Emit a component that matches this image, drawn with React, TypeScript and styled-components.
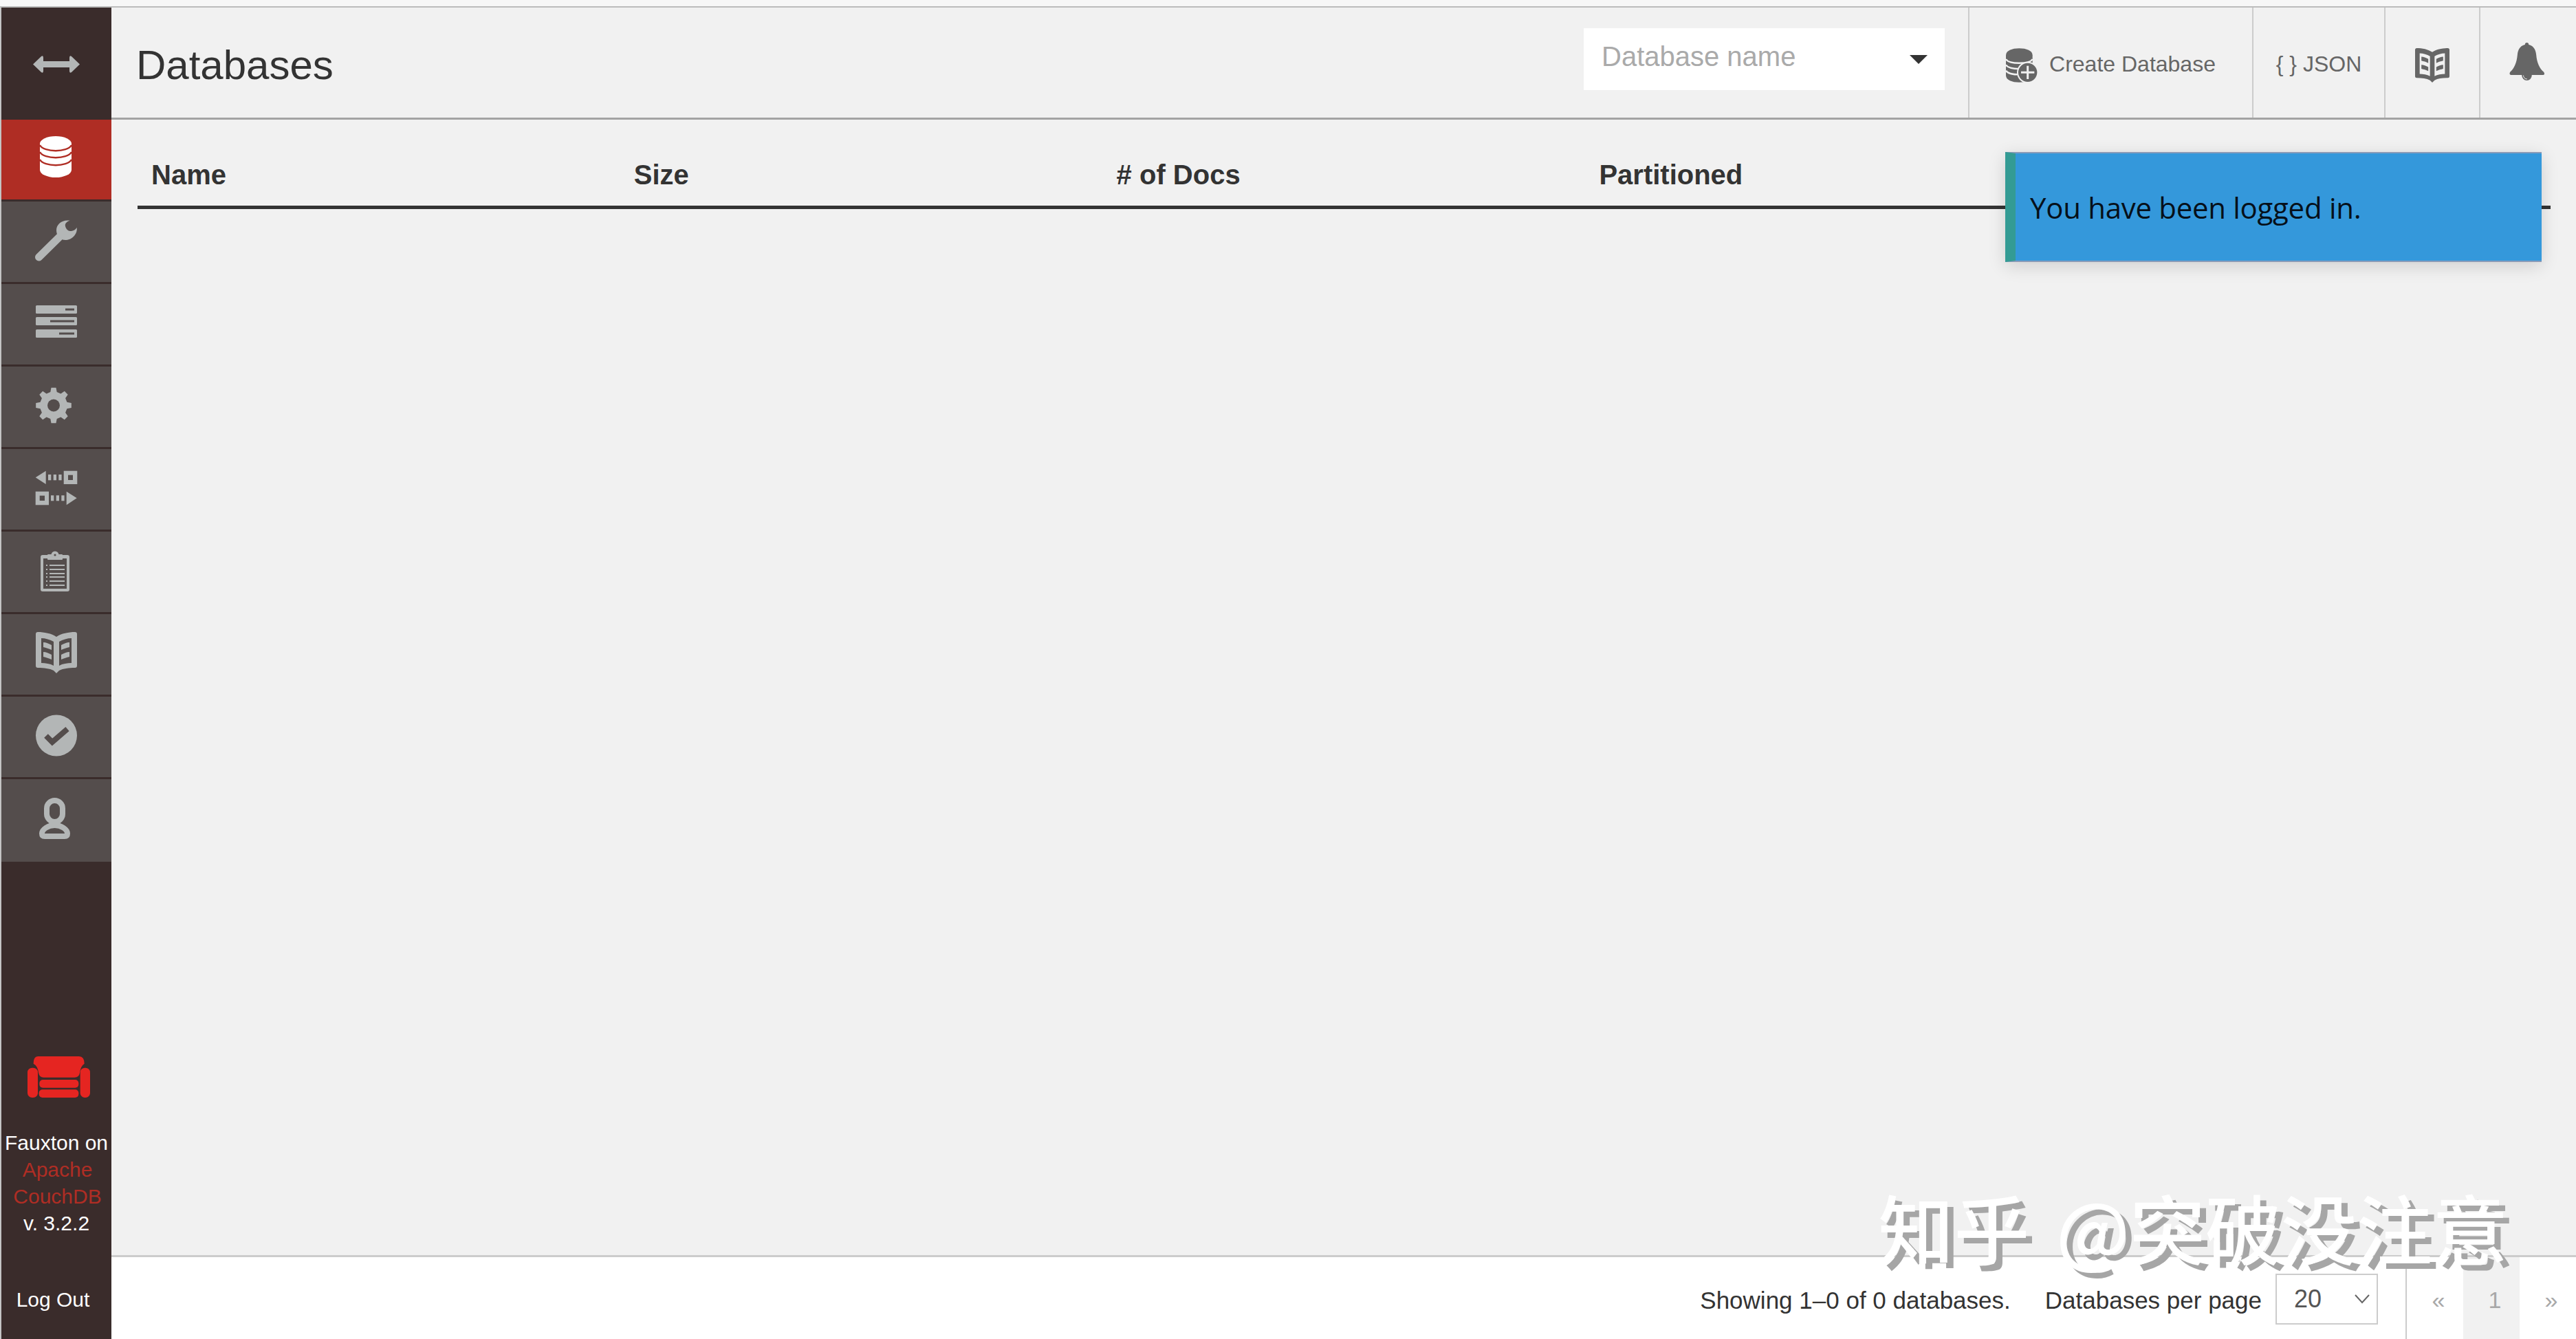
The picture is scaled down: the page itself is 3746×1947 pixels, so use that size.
import React from "react";
import styled, { createGlobalStyle } from "styled-components";

const SANS = `"Liberation Sans", Arial, sans-serif`;
const NAV_INK = "#b3b6b6";
const NAV_BG = "#544d4c";
const DARK = "#3a2c2b";
const RED = "#af2d24";
const GREY = "#666666";

const Global = createGlobalStyle`
  html, body { margin: 0; padding: 0; height: 100%; background: #f1f1f1; overflow: hidden; }
  #root { height: 100%; }
  * { box-sizing: border-box; }
`;

const Page = styled.div`
  position: relative;
  height: 100vh;
  display: flex;
  flex-direction: column;
  font-family: ${SANS};
  color: #333;
  background: #f1f1f1;
`;
const TopStrip = styled.div`
  height: 11px;
  flex: none;
  background: #f7f7f7;
  border-bottom: 2px solid #bcbcbc;
`;
const Shell = styled.div`
  flex: 1;
  min-height: 0;
  display: flex;
  border-left: 2px solid #c4c4c4;
`;
const Sidebar = styled.nav`
  width: 160px;
  flex: none;
  display: flex;
  flex-direction: column;
  background: ${DARK};
  color: #fff;
`;
const Burger = styled.div`
  height: 163px;
  flex: none;
  display: flex;
  align-items: center;
  justify-content: center;
  padding-top: 2px;
`;
const NavItem = styled.a<{ $active?: boolean }>`
  height: ${(p) => (p.$active ? 119 : 120)}px;
  flex: none;
  display: flex;
  align-items: center;
  justify-content: center;
  background: ${(p) => (p.$active ? RED : NAV_BG)};
  border-bottom: 3px solid ${DARK};
  &:last-of-type { border-bottom: 0; }
`;
const SideFoot = styled.div`
  margin-top: auto;
  display: flex;
  flex-direction: column;
  align-items: center;
  font-size: 30px;
  line-height: 39px;
  text-align: center;
`;
const Couch = styled.svg`
  width: 91px;
  height: 60px;
  margin-left: 7px;
  margin-bottom: 46px;
`;
const Version = styled.div`
  width: 160px;
`;
const ApacheLink = styled.span`
  display: block;
  color: ${RED};
  padding: 0 13px 0 16px;
`;
const LogOut = styled.a`
  display: block;
  margin: 72px 10px 38px 0;
  font-size: 30px;
`;

const Main = styled.main`
  flex: 1;
  min-width: 0;
  display: flex;
  flex-direction: column;
`;
const Header = styled.header`
  height: 163px;
  flex: none;
  display: flex;
  align-items: stretch;
  border-bottom: 3px solid #a3a3a3;
  padding-left: 36px;
`;
const Title = styled.h1`
  margin: 0 auto 0 0;
  align-self: center;
  font-size: 60px;
  line-height: 70px;
  font-weight: 400;
  color: #333;
  position: relative;
  top: 4px;
`;
const SearchBox = styled.div`
  align-self: flex-start;
  margin: 30px 34px 0 0;
  width: 525px;
  height: 90px;
  background: #fff;
  display: flex;
  align-items: center;
  justify-content: space-between;
  padding: 0 25px 7px 26px;
  color: #aaa;
  font-size: 40px;
`;
const Caret = styled.span`
  width: 0;
  height: 0;
  margin-top: 7px;
  border-left: 13px solid transparent;
  border-right: 13px solid transparent;
  border-top: 13px solid #333;
`;
const HeaderCell = styled.a<{ $w: number }>`
  width: ${(p) => p.$w}px;
  flex: none;
  display: flex;
  align-items: center;
  justify-content: center;
  gap: 17px;
  padding-top: 7px;
  border-left: 2px solid #cccccc;
  color: ${GREY};
  font-size: 32px;
`;
const HeaderLabel = styled.span`
  position: relative;
  top: -1px;
`;

const Content = styled.section`
  flex: 1;
  min-height: 0;
  padding: 0 37px 0 38px;
`;
const TableHead = styled.div`
  display: grid;
  grid-template-columns: repeat(5, 1fr);
  height: 130px;
  align-items: end;
  border-bottom: 5px solid #333;
`;
const HeadCell = styled.div`
  padding: 0 0 22px 20px;
  font-size: 40px;
  line-height: 46px;
  font-weight: 700;
  color: #333;
`;

const Footer = styled.footer`
  height: 122px;
  flex: none;
  background: #fff;
  border-top: 3px solid #cccccc;
  display: flex;
  justify-content: flex-end;
  align-items: stretch;
  font-size: 35px;
  color: #333;
`;
const FootInfo = styled.div`
  align-self: center;
  margin: 7px 50px 0 0;
`;
const PerPage = styled.div`
  align-self: center;
  margin: 7px 20px 0 0;
`;
const PageSelect = styled.div`
  align-self: center;
  margin: 2px 40px 0 0;
  width: 149px;
  height: 74px;
  border: 2px solid #cccccc;
  display: flex;
  align-items: center;
  justify-content: space-between;
  padding: 0 10px 0 25px;
  color: #555;
  font-size: 36px;
`;
const Pagination = styled.div`
  display: flex;
  border-left: 2px solid #cccccc;
`;
const PageCell = styled.a<{ $current?: boolean }>`
  width: 82px;
  display: flex;
  align-items: center;
  justify-content: center;
  padding: 6px 0 0 10px;
  font-size: 34px;
  color: #a8a8a8;
  background: ${(p) => (p.$current ? "#f1f1f1" : "transparent")};
`;

const Toast = styled.div`
  position: absolute;
  top: 221px;
  right: 50px;
  width: 780px;
  height: 160px;
  background: #3498db;
  border-left: 15px solid #339b94;
  border-top: 2px solid #8a9bb8;
  border-bottom: 2px solid #8a9bb8;
  box-shadow: 0 6px 24px rgba(0, 0, 0, 0.14);
  display: flex;
  align-items: center;
  padding: 0 0 0 21px;
  font-family: "Open Sans", "Noto Sans", sans-serif;
  font-size: 42px;
  letter-spacing: -0.3px;
  color: #06101a;
`;
const Watermark = styled.div`
  position: absolute;
  top: 1716px;
  right: 99px;
  font-family: "Noto Sans CJK SC", "Noto Sans", sans-serif;
  font-size: 110px;
  line-height: 134px;
  font-weight: 500;
  word-spacing: 14px;
  white-space: nowrap;
  color: #fff;
  text-shadow: 9px 8px 0 #a6a6a6;
`;

const Svg80 = styled.svg`
  width: 80px;
  height: 80px;
  display: block;
`;

const gearPath = (() => {
  const cx = 36, cy = 37.5, outer = 26, inner = 20, teeth = 8;
  const pts: string[] = [];
  for (let i = 0; i < teeth; i++) {
    const a = (i / teeth) * Math.PI * 2 - Math.PI / 2;
    const s = (Math.PI * 2) / teeth;
    const ps: [number, number][] = [
      [a - s * 0.3, inner],
      [a - s * 0.17, outer],
      [a + s * 0.17, outer],
      [a + s * 0.3, inner],
    ];
    ps.forEach(([t, r]) =>
      pts.push(`${(cx + r * Math.cos(t)).toFixed(1)} ${(cy + r * Math.sin(t)).toFixed(1)}`)
    );
  }
  return "M" + pts.join(" L") + "Z";
})();

const ArrowIcon = () => (
  <svg width="68" height="25" viewBox="0 0 68 25">
    <path fill={NAV_INK} d="M0 12.5 L12 1 Q15 -1 15 3 V8 H53 V3 Q53 -1 56 1 L68 12.5 L56 24 Q53 26 53 22 V17 H15 V22 Q15 26 12 24 Z" />
  </svg>
);
const DbIcon = () => (
  <Svg80 viewBox="0 0 80 80">
    <path fill="#fff" d="M16 17 a23 11 0 0 1 46 0 V55 a23 11 0 0 1 -46 0 Z" />
    <g fill="none" stroke={RED} strokeWidth="2.5">
      <path d="M16 19 C22 30 56 30 62 19" />
      <path d="M16 29 C22 40 56 40 62 29" />
      <path d="M16 40 C22 51 56 51 62 40" />
    </g>
  </Svg80>
);
const WrenchIcon = () => (
  <Svg80 viewBox="0 0 80 80">
    <path fill={NAV_INK} d="M59.7 8.7 C55 10 52 13 53 17 C54 21 57 24 60 24 C64 24 68 22 69.7 18.7 C71 29 62 37 53 37 C45 37 40 30 40 23 C40 14 48 7 59.7 8.7Z" />
    <path stroke={NAV_INK} strokeWidth="11" strokeLinecap="round" d="M46 31 L14.5 62" />
  </Svg80>
);
const ServerIcon = () => (
  <Svg80 viewBox="0 0 80 80">
    {[[12, 53, 13], [29, 31, 35], [47, 44, 22]].map(([y, x, w]) => (
      <g key={y}>
        <rect x="10" y={y} width="60" height="12" rx="1.5" fill={NAV_INK} />
        <rect x={x} y={y + 4.5} width={w} height="3" fill={NAV_BG} />
      </g>
    ))}
  </Svg80>
);
const GearIcon = () => (
  <Svg80 viewBox="0 0 80 80">
    <path fill={NAV_INK} d={gearPath} />
    <circle cx="36" cy="37.5" r="9" fill={NAV_BG} />
  </Svg80>
);
const ReplicateIcon = () => (
  <Svg80 viewBox="0 0 80 80" fill={NAV_INK}>
    <polygon points="9.7,22.3 24.7,12.7 24.7,32" />
    <rect x="28" y="18" width="4.3" height="8.3" />
    <rect x="35.7" y="18" width="4.3" height="8.3" />
    <rect x="43.3" y="18" width="4.3" height="8.3" />
    <rect x="50.7" y="12.7" width="19.6" height="19.3" />
    <rect x="57" y="18.7" width="7" height="7.3" fill={NAV_BG} />
    <rect x="9.7" y="42.7" width="19.3" height="19.6" />
    <rect x="15.7" y="48.7" width="7.3" height="7.3" fill={NAV_BG} />
    <rect x="32" y="48.3" width="4.3" height="8" />
    <rect x="39.7" y="48.3" width="4.3" height="8" />
    <rect x="47.3" y="48.3" width="4.3" height="8" />
    <polygon points="54.7,42.7 54.7,62.3 69.7,52.3" />
  </Svg80>
);
const ClipboardIcon = () => (
  <Svg80 viewBox="0 0 80 80">
    <rect x="17" y="15" width="42" height="53" rx="3" fill={NAV_INK} />
    <rect x="21" y="20" width="34" height="44" fill={NAV_BG} />
    <rect x="27" y="14" width="22" height="8" rx="1" fill={NAV_INK} />
    <circle cx="38" cy="15" r="5.5" fill={NAV_INK} />
    <circle cx="38" cy="15" r="1.6" fill={NAV_BG} />
    {[30, 36, 42, 47, 53, 59].map((y) => (
      <g key={y} fill={NAV_INK}>
        <rect x="30" y={y - 1} width="22" height="2" />
        <rect x="25" y={y - 1} width="2" height="2" />
      </g>
    ))}
  </Svg80>
);
const BookShape = ({ ink, paper, detail }: { ink: string; paper: string; detail: string }) => (
  <>
    <path fill={ink} d="M10 10 Q10 7 13 7 C22 7 33 9 40 14 C47 9 58 7 67 7 Q70 7 70 10 V56 Q70 59 67 59 C58 59 50 60 44 63 L40 67 L36 63 C30 60 22 59 13 59 Q10 59 10 56Z" />
    <path fill={paper} d="M18 16 C24 16 31 18 36 21 V56 C31 53 24 52 18 52Z" />
    <path fill={paper} d="M62 16 C56 16 49 18 44 21 V56 C49 53 56 52 62 52Z" />
    <path fill={detail} d="M21 22 C25 22 29 24 33 26 V33 C29 31 25 30 21 29Z" />
    <path fill={detail} d="M21 36 C25 36 29 38 33 40 V47 C29 45 25 44 21 43Z" />
    <path fill={detail} d="M59 22 C55 22 51 24 47 26 V33 C51 31 55 30 59 29Z" />
    <path fill={detail} d="M59 36 C55 36 51 38 47 40 V47 C51 45 55 44 59 43Z" />
  </>
);
const BookIcon = () => (
  <Svg80 viewBox="0 0 80 80">
    <BookShape ink={NAV_INK} paper={NAV_BG} detail={NAV_INK} />
  </Svg80>
);
const CheckIcon = () => (
  <Svg80 viewBox="0 0 80 80">
    <circle cx="40" cy="37.5" r="30" fill={NAV_INK} />
    <path fill="none" stroke={NAV_BG} strokeWidth="8" d="M25 38 L34 47 L56 28" />
  </Svg80>
);
const UserIcon = () => (
  <Svg80 viewBox="0 0 80 80">
    <g fill="none" stroke={NAV_INK} strokeWidth="8">
      <rect x="26" y="11" width="23" height="31" rx="11.5" />
      <path d="M37.5 47 C28 47 19 53 19 59 Q19 63 23 63 H52 Q56 63 56 59 C56 53 47 47 37.5 47 Z" />
    </g>
  </Svg80>
);
const CouchLogo = () => (
  <Couch viewBox="120 258 273 180">
    <g fill="#e52521">
      <path d="M165 258 H345 Q368 258 368 290 Q352 300 348 330 Q345 350 325 350 H190 Q172 350 168 330 Q165 300 146 290 Q146 258 165 258Z" />
      <rect x="120" y="308" width="45" height="130" rx="20" />
      <rect x="350" y="308" width="43" height="130" rx="20" />
      <rect x="172" y="360" width="171" height="35" rx="15" />
      <rect x="170" y="403" width="173" height="35" rx="15" />
    </g>
  </Couch>
);
const CreateDbIcon = () => (
  <svg width="46" height="50" viewBox="47 37 138 148">
    <path fill={GREY} d="M47 67 C47 47 74 37 105 37 C136 37 163 47 163 67 V155 C163 175 136 185 105 185 C74 185 47 175 47 155Z" />
    <g fill="none" stroke="#f1f1f1" strokeWidth="7">
      <path d="M47 84 C60 107 150 107 163 84" />
      <path d="M47 109 C60 132 150 132 163 109" />
      <path d="M47 134 C60 157 150 157 163 134" />
    </g>
    <circle cx="142" cy="142" r="47" fill="#f1f1f1" />
    <circle cx="142" cy="142" r="41" fill={GREY} />
    <path stroke="#f1f1f1" strokeWidth="9" d="M142 113 V171 M113 142 H171" />
  </svg>
);
const HeaderBookIcon = () => (
  <svg width="50" height="50" viewBox="10 7 60 60">
    <BookShape ink={GREY} paper="#f1f1f1" detail={GREY} />
  </svg>
);
const BellIcon = () => (
  <svg width="52" height="56" viewBox="475 37 155 168">
    <g fill={GREY}>
      <circle cx="551" cy="45" r="8" />
      <path d="M551 45 C525 45 512 65 510 90 C507 125 495 150 478 165 Q472 178 485 178 H618 Q633 178 625 165 C607 150 595 125 592 90 C590 65 577 45 551 45Z" />
      <path d="M529 178 H573 A22 24 0 0 1 529 178Z" />
    </g>
    <path fill="none" stroke="#f1f1f1" strokeWidth="3" d="M536 180 A16 16 0 0 0 552 196" />
  </svg>
);
const BellWrap = styled.span`
  display: block;
  position: relative;
  top: -5px;
  left: -2px;
  line-height: 0;
`;
const Chevron = () => (
  <svg width="22" height="14" viewBox="0 0 22 14">
    <path fill="none" stroke="#666" strokeWidth="2" d="M1 1 L11 12 L21 1" />
  </svg>
);

export default function App() {
  return (
    <Page>
      <Global />
      <TopStrip />
      <Shell>
        <Sidebar>
          <Burger><ArrowIcon /></Burger>
          <NavItem $active><DbIcon /></NavItem>
          <NavItem><WrenchIcon /></NavItem>
          <NavItem><ServerIcon /></NavItem>
          <NavItem><GearIcon /></NavItem>
          <NavItem><ReplicateIcon /></NavItem>
          <NavItem><ClipboardIcon /></NavItem>
          <NavItem><BookIcon /></NavItem>
          <NavItem><CheckIcon /></NavItem>
          <NavItem><UserIcon /></NavItem>
          <SideFoot>
            <CouchLogo />
            <Version>
              Fauxton on
              <ApacheLink>Apache CouchDB</ApacheLink>
              v. 3.2.2
            </Version>
            <LogOut>Log Out</LogOut>
          </SideFoot>
        </Sidebar>
        <Main>
          <Header>
            <Title>Databases</Title>
            <SearchBox>
              <span>Database name</span>
              <Caret />
            </SearchBox>
            <HeaderCell $w={413}>
              <CreateDbIcon />
              <HeaderLabel>Create Database</HeaderLabel>
            </HeaderCell>
            <HeaderCell $w={192}><HeaderLabel>{"{ } JSON"}</HeaderLabel></HeaderCell>
            <HeaderCell $w={138}><HeaderBookIcon /></HeaderCell>
            <HeaderCell $w={141}><BellWrap><BellIcon /></BellWrap></HeaderCell>
          </Header>
          <Content>
            <TableHead>
              <HeadCell>Name</HeadCell>
              <HeadCell>Size</HeadCell>
              <HeadCell># of Docs</HeadCell>
              <HeadCell>Partitioned</HeadCell>
              <HeadCell />
            </TableHead>
          </Content>
          <Footer>
            <FootInfo>Showing 1–0 of 0 databases.</FootInfo>
            <PerPage>Databases per page</PerPage>
            <PageSelect>
              <span>20</span>
              <Chevron />
            </PageSelect>
            <Pagination>
              <PageCell>«</PageCell>
              <PageCell $current>1</PageCell>
              <PageCell>»</PageCell>
            </Pagination>
          </Footer>
        </Main>
      </Shell>
      <Toast>You have been logged in.</Toast>
      <Watermark>知乎 @突破没注意</Watermark>
    </Page>
  );
}
